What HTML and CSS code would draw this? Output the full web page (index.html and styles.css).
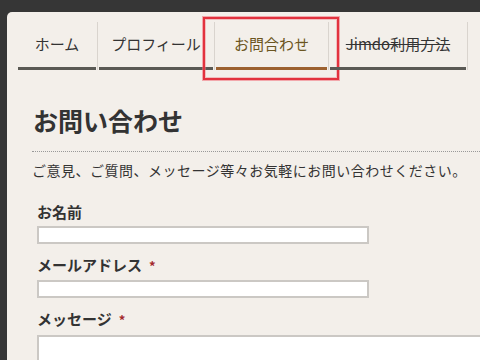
FILE: index.html
```html
<!DOCTYPE html>
<html lang="ja">
<head>
<meta charset="utf-8">
<title>お問い合わせ</title>
<link rel="stylesheet" href="styles.css">
</head>
<body>
<div class="page">
  <nav class="nav">
    <ul class="tabs">
      <li class="tab"><a class="tab-link tab-home" href="#">ホーム</a></li>
      <li class="tab"><a class="tab-link tab-profile" href="#">プロフィール</a></li>
      <li class="tab tab-current"><a class="tab-link tab-contact" href="#">お問合わせ</a><span class="highlight"></span></li>
      <li class="tab"><a class="tab-link tab-jimdo" href="#">Jimdo利用方法</a></li>
    </ul>
  </nav>
  <main class="content">
    <h1 class="title">お問い合わせ</h1>
    <p class="intro">ご意見、ご質問、メッセージ等々お気軽にお問い合わせください。</p>
    <form class="form">
      <label class="field-label">お名前</label>
      <input class="field-input" type="text">
      <label class="field-label">メールアドレス<span class="req">*</span></label>
      <input class="field-input" type="text">
      <label class="field-label">メッセージ<span class="req">*</span></label>
      <textarea class="field-text"></textarea>
    </form>
  </main>
</div>
</body>
</html>
```
FILE: styles.css
```css
html, body {
  margin: 0;
  padding: 0;
  background: #363636;
  overflow: hidden;
  height: 100%;
}
body {
  font-family: "Noto Sans CJK JP", "DejaVu Sans", sans-serif;
  color: #333;
}
.page {
  margin: 12px 0 0 7px;
  background: #f3efea;
  border-top-left-radius: 5px;
  height: 338px;
  padding-top: 10px;
  overflow: hidden;
}
.tabs {
  list-style: none;
  margin: 0;
  padding: 0 0 0 11px;
  display: flex;
}
.tab {
  position: relative;
  padding-right: 1px;
  border-right: 1px solid #d9d4ce;
  margin-right: 1px;
}
.tab-link {
  display: block;
  box-sizing: border-box;
  padding: 12px 0 13px;
  font-size: 15px;
  line-height: 20px;
  text-align: center;
  color: #333;
  text-decoration: none;
  border-bottom: 3px solid #5a5954;
}
.tab-home { width: 78px; }
.tab-profile { width: 114px; }
.tab-contact { width: 111px; color: #6b5520; border-bottom-color: #9c6130; }
.tab-jimdo { width: 136px; text-decoration: line-through; }
.highlight {
  position: absolute;
  left: -13px;
  top: -5px;
  width: 136px;
  height: 63px;
  box-sizing: border-box;
  border: 2px solid #e2323e;
  box-shadow: 0 0 0 1px rgba(240, 110, 120, 0.55), inset 0 0 0 1px rgba(240, 130, 140, 0.45);
}
.content {
  margin-top: 35px;
  padding-left: 25px;
}
.title {
  margin: 0;
  font-size: 25px;
  line-height: 30px;
  font-weight: bold;
  color: #333;
  padding: 0 0 16px 1px;
  border-bottom: 1px dotted #999;
}
.intro {
  margin: 8px 0 0;
  font-size: 14px;
  line-height: 20px;
  letter-spacing: 0.5px;
  color: #333;
  white-space: nowrap;
}
.form {
  margin-top: 22px;
  padding-left: 5px;
  display: flex;
  flex-direction: column;
  align-items: flex-start;
}
.field-label {
  font-size: 15px;
  line-height: 20px;
  font-weight: bold;
  color: #333;
  margin-bottom: 4px;
}
.req {
  color: #a3282c;
  margin-left: 7px;
  font-size: 13px;
}
.field-input {
  box-sizing: border-box;
  width: 332px;
  height: 18px;
  margin: 0 0 11px;
  padding: 0;
  border: 2px solid #cbc8c4;
  background: #fff;
}
.field-text {
  box-sizing: border-box;
  width: 500px;
  height: 80px;
  margin: 1px 0 0;
  border: 2px solid #cbc8c4;
  background: #fff;
  resize: none;
}
```
